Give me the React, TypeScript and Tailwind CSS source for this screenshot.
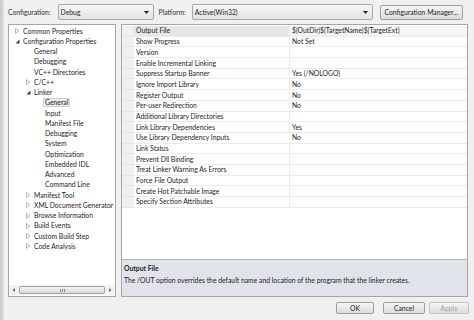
type TreeItem = { label: string; level: number; arrow?: "open" | "closed"; selected?: boolean };

const tree: TreeItem[] = [
  { label: "Common Properties", level: 0, arrow: "closed" },
  { label: "Configuration Properties", level: 0, arrow: "open" },
  { label: "General", level: 1 },
  { label: "Debugging", level: 1 },
  { label: "VC++ Directories", level: 1 },
  { label: "C/C++", level: 1, arrow: "closed" },
  { label: "Linker", level: 1, arrow: "open" },
  { label: "General", level: 2, selected: true },
  { label: "Input", level: 2 },
  { label: "Manifest File", level: 2 },
  { label: "Debugging", level: 2 },
  { label: "System", level: 2 },
  { label: "Optimization", level: 2 },
  { label: "Embedded IDL", level: 2 },
  { label: "Advanced", level: 2 },
  { label: "Command Line", level: 2 },
  { label: "Manifest Tool", level: 1, arrow: "closed" },
  { label: "XML Document Generator", level: 1, arrow: "closed" },
  { label: "Browse Information", level: 1, arrow: "closed" },
  { label: "Build Events", level: 1, arrow: "closed" },
  { label: "Custom Build Step", level: 1, arrow: "closed" },
  { label: "Code Analysis", level: 1, arrow: "closed" },
];

const props: [string, string][] = [
  ["Output File", "$(OutDir)$(TargetName)$(TargetExt)"],
  ["Show Progress", "Not Set"],
  ["Version", ""],
  ["Enable Incremental Linking", ""],
  ["Suppress Startup Banner", "Yes (/NOLOGO)"],
  ["Ignore Import Library", "No"],
  ["Register Output", "No"],
  ["Per-user Redirection", "No"],
  ["Additional Library Directories", ""],
  ["Link Library Dependencies", "Yes"],
  ["Use Library Dependency Inputs", "No"],
  ["Link Status", ""],
  ["Prevent Dll Binding", ""],
  ["Treat Linker Warning As Errors", ""],
  ["Force File Output", ""],
  ["Create Hot Patchable Image", ""],
  ["Specify Section Attributes", ""],
];

function Arrow({ kind }: { kind?: "open" | "closed" }) {
  if (kind === "closed")
    return (
      <svg width="5" height="6" viewBox="0 0 5 6">
        <path d="M0.5 0.5 L4 3 L0.5 5.5 Z" fill="none" stroke="#a6a6a6" strokeWidth="0.8" />
      </svg>
    );
  if (kind === "open")
    return (
      <svg width="5" height="5" viewBox="0 0 5 5">
        <path d="M4.5 0.5 L4.5 4.5 L0.5 4.5 Z" fill="#3c3c3c" />
      </svg>
    );
  return null;
}

function Combo({ value, className }: { value: string; className: string }) {
  return (
    <div
      className={`h-[16px] flex items-center justify-between border border-[#a9a9a9] rounded-[2px] bg-gradient-to-b from-[#f7f7f7] to-[#e2e2e2] pl-[2px] pr-[4px] ${className}`}
    >
      <span>{value}</span>
      <svg width="5" height="3" viewBox="0 0 5 3">
        <path d="M0 0 L5 0 L2.5 3 Z" fill="#202020" />
      </svg>
    </div>
  );
}

function Btn({ label, className, disabled }: { label: string; className: string; disabled?: boolean }) {
  return (
    <div
      className={`h-[12px] flex items-center justify-center border rounded-[2px] bg-gradient-to-b from-[#f6f6f6] to-[#dcdcdc] ${
        disabled ? "border-[#c4c4c4] text-[#a3a3a3]" : "border-[#9e9e9e]"
      } ${className}`}
    >
      {label}
    </div>
  );
}

export default function App() {
  return (
    <div className="w-[474px] h-[320px] flex bg-[#f0f0f0] text-[6.8px] leading-none text-[#1e1e1e] font-['Segoe_UI','Lato',sans-serif] overflow-hidden">
      <div className="w-[4px] bg-gradient-to-r from-[#c3c8d0] to-[#dfe2e6]" />
      <div className="flex-1 flex flex-col">
        {/* top bar */}
        <div className="h-[24px] flex items-center pl-[4px]">
          <span className="text-[#303030]">Configuration:</span>
          <Combo value="Debug" className="ml-[7px] w-[96px]" />
          <span className="ml-[5px] text-[#303030]">Platform:</span>
          <Combo value="Active(Win32)" className="ml-[6px] w-[181px]" />
          <Btn label="Configuration Manager..." className="ml-[7px] w-[83px] h-[15px]" />
        </div>

        {/* main */}
        <div className="h-[273px] flex pl-[4px]">
          <div className="w-[108px] border border-[#a6a6a6] bg-white flex flex-col">
            <div className="flex-1 overflow-hidden pt-[1px]">
              {tree.map((t, i) => (
                <div
                  key={i}
                  className="h-[10.25px] flex items-center whitespace-nowrap"
                  style={{ paddingLeft: 3 + t.level * 11 }}
                >
                  <span className="w-[11px] flex items-center justify-center shrink-0">
                    <Arrow kind={t.arrow} />
                  </span>
                  <span
                    className={
                      t.selected
                        ? "bg-[#ececec] border border-[#d2d2d2] px-[1px] -ml-[2px] h-[9px] flex items-center"
                        : ""
                    }
                  >
                    {t.label}
                  </span>
                </div>
              ))}
            </div>
            {/* horizontal scrollbar */}
            <div className="h-[10px] flex items-center bg-[#f2f2f2] px-[2px] mb-[1px]">
              <svg width="6" height="6" viewBox="0 0 6 6">
                <path d="M4 1 L1.5 3 L4 5 Z" fill="#6b6b6b" />
              </svg>
              <div className="flex-1 mx-[2px] h-[8px] border border-[#a3a3a3] rounded-[2px] bg-gradient-to-b from-[#f4f4f4] to-[#d9d9d9] flex items-center justify-center gap-[1px]">
                <span className="w-[1px] h-[3px] bg-[#8a8a8a]" />
                <span className="w-[1px] h-[3px] bg-[#8a8a8a]" />
                <span className="w-[1px] h-[3px] bg-[#8a8a8a]" />
              </div>
              <svg width="6" height="6" viewBox="0 0 6 6">
                <path d="M2 1 L4.5 3 L2 5 Z" fill="#6b6b6b" />
              </svg>
            </div>
          </div>

          <div className="ml-[5px] w-[347px] border border-[#a6a6a6] flex flex-col">
            {/* property grid */}
            <div className="h-[234px] bg-white">
              <div className="pt-[1px]">
                {props.map(([name, value], i) => (
                  <div key={i} className="h-[10.7px] flex">
                    <div className="w-[12px] bg-[#f0f0f0] border-b border-[#e4e4e4]" />
                    <div
                      className={`w-[156px] flex items-center pl-[2px] border-b border-r border-[#ececec] ${
                        i === 0 ? "bg-[#e6e6e6]" : ""
                      }`}
                    >
                      {name}
                    </div>
                    <div
                      className={`flex-1 flex items-center pl-[2px] border-b border-[#ececec] ${
                        i === 0 ? "bg-[#f4f4f4]" : ""
                      }`}
                    >
                      {value}
                    </div>
                  </div>
                ))}
              </div>
            </div>
            {/* description */}
            <div className="flex-1 border-t border-[#b4b4b4] bg-[#e1e3ea] px-[2px] pt-[5px]">
              <div className="font-bold">Output File</div>
              <div className="mt-[5px]">
                The /OUT option overrides the default name and location of the program that the linker creates.
              </div>
            </div>
          </div>
        </div>

        {/* buttons */}
        <div className="flex pt-[5px] pr-[5px]">
          <Btn label="OK" className="ml-auto w-[38px]" />
          <Btn label="Cancel" className="ml-[9px] w-[42px]" />
          <Btn label="Apply" className="ml-[4px] w-[40px]" disabled />
        </div>
      </div>
    </div>
  );
}
